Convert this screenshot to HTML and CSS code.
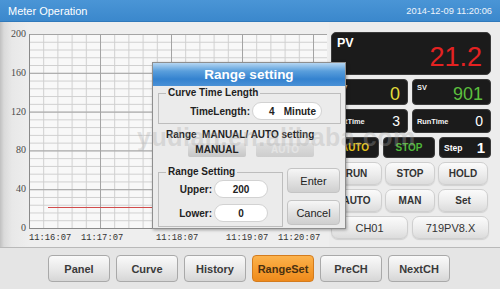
FILE: index.html
```html
<!DOCTYPE html>
<html>
<head>
<meta charset="utf-8">
<link rel="stylesheet" href="styles.css">
</head>
<body>
<div class="screen">
  <header class="titlebar">
    <span class="app-title">Meter Operation</span>
    <span class="clock">2014-12-09 11:20:06</span>
  </header>
  <main class="main">
    <div class="chart">
      <svg class="chart-svg" width="329" height="225" viewBox="0 0 329 225">
        <defs>
          <pattern id="minor" patternUnits="userSpaceOnUse" x="29" y="12" width="14.2" height="7.76">
            <path d="M14.2 0.5 H0.5 V7.76" fill="none" stroke="#cfcfcf" stroke-width="1"/>
          </pattern>
          <pattern id="major" patternUnits="userSpaceOnUse" x="29" y="12" width="71" height="38.8">
            <path d="M71 0.5 H0.5 V38.8" fill="none" stroke="#a4a4a4" stroke-width="1"/>
          </pattern>
        </defs>
        <rect x="29" y="12" width="298" height="194" fill="#f8f8f8"/>
        <rect x="29" y="12" width="298" height="194" fill="url(#minor)"/>
        <rect x="29" y="12" width="298" height="194" fill="url(#major)"/>
        <line x1="29.5" y1="12" x2="29.5" y2="207" stroke="#8a8a8a"/>
        <line x1="29" y1="206.5" x2="327" y2="206.5" stroke="#8a8a8a"/>
        <line x1="48" y1="185.5" x2="327" y2="185.5" stroke="#d24c4c"/>
        <g class="ylab">
          <text x="26" y="15">200</text>
          <text x="26" y="54">160</text>
          <text x="26" y="93">120</text>
          <text x="26" y="131">80</text>
          <text x="26" y="170">40</text>
          <text x="26" y="209">0</text>
        </g>
        <g class="xlab">
          <text x="29" y="218">11:16:07</text>
          <text x="81" y="218">11:17:07</text>
          <text x="156" y="218">11:18:07</text>
          <text x="226" y="218">11:19:07</text>
          <text x="278" y="218">11:20:07</text>
        </g>
      </svg>
    </div>
    <aside class="side">
      <div class="pv">
        <span class="pv-label">PV</span>
        <span class="pv-value">21.2</span>
      </div>
      <div class="row two tall">
        <div class="cell top"><span class="lbl">MV</span><span class="val big yellow">0</span></div>
        <div class="cell top"><span class="lbl">SV</span><span class="val big green">901</span></div>
      </div>
      <div class="row two mid">
        <div class="cell"><span class="lbl">SetTime</span><span class="val white">3</span></div>
        <div class="cell"><span class="lbl">RunTime</span><span class="val white">0</span></div>
      </div>
      <div class="row three small">
        <div class="cell status yellow">AUTO</div>
        <div class="cell status green">STOP</div>
        <div class="cell step"><span class="step-lbl">Step</span><span class="step-val">1</span></div>
      </div>
      <div class="btnrow three">
        <button class="key bold">RUN</button>
        <button class="key bold">STOP</button>
        <button class="key bold">HOLD</button>
      </div>
      <div class="btnrow three">
        <button class="key bold">AUTO</button>
        <button class="key bold">MAN</button>
        <button class="key bold">Set</button>
      </div>
      <div class="btnrow two">
        <button class="key">CH01</button>
        <button class="key">719PV8.X</button>
      </div>
    </aside>
  </main>
  <footer class="footer">
    <button class="tab">Panel</button>
    <button class="tab">Curve</button>
    <button class="tab">History</button>
    <button class="tab active">RangeSet</button>
    <button class="tab">PreCH</button>
    <button class="tab">NextCH</button>
  </footer>

  <div class="dialog">
    <div class="dlg-title">Range setting</div>
    <div class="dlg-body">
      <fieldset class="group g1">
        <legend>Curve Time Length</legend>
        <div class="field-row right">
          <span class="flabel">TimeLength:</span>
          <span class="pill wide"><span class="pnum">4</span><span class="punit">Minute</span></span>
        </div>
      </fieldset>
      <div class="mode-title">Range&nbsp; MANUAL/ AUTO setting</div>
      <div class="mode-row">
        <button class="mode on">MANUAL</button>
        <button class="mode off">AUTO</button>
      </div>
      <div class="lower">
        <fieldset class="group g2">
          <legend>Range Setting</legend>
          <div class="field-row">
            <span class="flabel w">Upper:</span>
            <span class="pill num">200</span>
          </div>
          <div class="field-row">
            <span class="flabel w">Lower:</span>
            <span class="pill num">0</span>
          </div>
        </fieldset>
        <div class="actions">
          <button class="act">Enter</button>
          <button class="act">Cancel</button>
        </div>
      </div>
    </div>
  </div>
  <div class="watermark">yudian.en.alibaba.com</div>
</div>
</body>
</html>
```
FILE: styles.css
```css
* { box-sizing: border-box; }
html, body { margin: 0; padding: 0; }
body {
  width: 500px;
  height: 289px;
  overflow: hidden;
  font-family: "Liberation Sans", Arial, sans-serif;
  background: #e9e9e9;
}
.screen {
  position: relative;
  width: 500px;
  height: 289px;
  display: flex;
  flex-direction: column;
}
.titlebar {
  height: 22px;
  flex: none;
  display: flex;
  align-items: center;
  justify-content: space-between;
  padding: 0 8px 0 8px;
  background: linear-gradient(#4a95d6, #3b88cc);
  color: #fff;
  border-bottom: 1px solid #3079bb;
}
.app-title { font-size: 11px; }
.clock { font-size: 9.3px; color: #eef4fb; }

.main {
  height: 225px;
  flex: none;
  display: flex;
  background: #ececec;
}
.chart {
  width: 329px;
  flex: none;
  background: linear-gradient(90deg, #c0c0c0 0px, #dadada 4px, #e8e8e8 12px, #eeeeee 29px);
}
.chart-svg { display: block; }
.ylab text {
  font-family: "Liberation Serif", "Times New Roman", serif;
  font-size: 10px;
  fill: #4a4a4a;
  text-anchor: end;
}
.xlab text {
  font-family: "Liberation Mono", "Courier New", monospace;
  font-size: 8.8px;
  fill: #333;
}

.side {
  width: 171px;
  flex: none;
  padding: 10px 9px 0 2px;
  display: flex;
  flex-direction: column;
  gap: 4px;
}
.pv {
  height: 43px;
  background: #1b1b1b;
  border-radius: 5px;
  border: 1px solid #3a3a3a;
  position: relative;
  display: flex;
  justify-content: space-between;
  padding: 3px 8px 0 5px;
}
.pv-label { color: #fff; font-weight: bold; font-size: 12.5px; }
.pv-value {
  color: #e32222;
  font-size: 27px;
  align-self: flex-end;
  line-height: 30px;
  margin-bottom: 2px;
}
.row { display: grid; gap: 4px; }
.row.two { grid-template-columns: 77px 79px; }
.row.three { grid-template-columns: 48px 1fr 52px; gap: 5px 4px; }
.row.tall { height: 26px; }
.row.mid { height: 24px; }
.row.small { height: 21px; }
.cell {
  background: #1b1b1b;
  border: 1px solid #3a3a3a;
  border-radius: 4px;
  display: flex;
  align-items: center;
  justify-content: space-between;
  padding: 0 7px 0 4px;
  color: #fff;
}
.cell.top { align-items: flex-start; }
.cell.top .lbl { margin-top: 3px; }
.cell.top .val { align-self: flex-end; line-height: 20px; }
.lbl { font-size: 7.4px; font-weight: bold; color: #f2f2f2; }
.val { font-size: 14px; line-height: 16px; }
.val.big { font-size: 18px; }
.yellow { color: #e2dc3a; }
.green { color: #5cbf3e; }
.white { color: #fff; }
.status {
  justify-content: center;
  font-weight: bold;
  font-size: 10px;
  padding: 0;
}
.status.yellow { color: #e6c41e; }
.status.green { color: #4fb83a; }
.step { padding: 0 5px 0 4px; }
.step-lbl { font-size: 8.5px; font-weight: bold; }
.step-val { font-size: 15px; font-weight: bold; }

.btnrow { display: grid; height: 23px; gap: 3px; }
.btnrow.three { grid-template-columns: 51px 50px 50px; }
.btnrow.two { grid-template-columns: 77px 77px; gap: 4px; }
.key {
  font-family: "Liberation Sans", Arial, sans-serif;
  border: 1px solid #cfcfcf;
  border-radius: 7px;
  background: linear-gradient(#fbfbfb, #ececec 55%, #dcdcdc);
  color: #333;
  font-size: 11px;
  padding: 0;
  box-shadow: 0 1px 1px rgba(0,0,0,0.12);
}
.key.bold { font-weight: bold; font-size: 10px; }

.footer {
  flex: 1;
  border-top: 1px solid #b9b9b9;
  background: #e5e5e5;
  display: flex;
  gap: 6px;
  padding: 7px 0 0 48px;
  align-items: flex-start;
}
.tab {
  font-family: "Liberation Sans", Arial, sans-serif;
  width: 62px;
  height: 27px;
  font-size: 11px;
  font-weight: bold;
  color: #3a3a3a;
  border: 1px solid #a9a9a9;
  border-radius: 4px;
  background: linear-gradient(#fafafa, #e6e6e6 60%, #d6d6d6);
  padding: 0;
}
.tab.active {
  background: linear-gradient(#fcb24c, #f59a2c 60%, #ee8a1c);
  border-color: #d47c1e;
  color: #4a3010;
}

.dialog {
  position: absolute;
  left: 152px;
  top: 62px;
  width: 194px;
  height: 167px;
  background: #ebebeb;
  border: 1px solid #8e8e8e;
  box-shadow: 1px 1px 3px rgba(0,0,0,0.35);
}
.dlg-title {
  height: 23px;
  background: linear-gradient(#b5d6f2 0%, #5a9fdc 35%, #3482cf 70%, #4a91d6 100%);
  color: #fff;
  font-weight: bold;
  font-size: 13.5px;
  text-align: center;
  line-height: 23px;
}
.dlg-body { padding: 1px 4px 0 5px; }
.group {
  margin: 0;
  border: 1px solid #bdbdbd;
  padding: 0;
  min-width: 0;
}
.group legend {
  font-size: 10px;
  font-weight: bold;
  color: #1e1e1e;
  padding: 0 2px;
  margin-left: 7px;
  line-height: 12px;
}
.g1 { padding: 3px 18px 3px 0; }
.field-row { display: flex; align-items: center; gap: 2px; }
.field-row.right { justify-content: flex-end; }
.flabel { font-size: 10px; font-weight: bold; color: #222; }
.flabel.w { width: 53px; text-align: right; }
.pill {
  height: 18px;
  background: #fff;
  border: 1px solid #d2d2d2;
  border-radius: 9px;
  display: flex;
  align-items: center;
  font-size: 10px;
  font-weight: bold;
  color: #222;
}
.pill.wide { width: 70px; padding: 0 5px 0 16px; justify-content: space-between; }
.pill.num { width: 54px; justify-content: center; }
.mode-title {
  font-size: 10px;
  font-weight: bold;
  color: #222;
  margin: 5px 0 0 8px;
  line-height: 12px;
}
.mode-row {
  display: flex;
  gap: 10px;
  padding-left: 30px;
  margin-top: 2px;
}
.mode {
  font-family: "Liberation Sans", Arial, sans-serif;
  width: 58px;
  height: 14px;
  font-size: 10px;
  font-weight: bold;
  border: none;
  border-radius: 2px;
  background: linear-gradient(#e2e2e2, #c6c6c6);
  padding: 0;
  line-height: 14px;
}
.mode.on { color: #222; }
.mode.off { color: #e4e4e4; background: linear-gradient(#dedede, #cdcdcd); }
.lower {
  display: flex;
  align-items: flex-start;
  margin-top: 3px;
}
.g2 {
  width: 125px;
  height: 61px;
  margin-top: 6px;
  padding: 2px 0 0 0;
  display: flex;
  flex-direction: column;
  gap: 6px;
}
.actions {
  display: flex;
  flex-direction: column;
  gap: 7px;
  margin: 8px 0 0 4px;
}
.act {
  font-family: "Liberation Sans", Arial, sans-serif;
  width: 53px;
  height: 25px;
  font-size: 11px;
  color: #222;
  border: 1px solid #c4c4c4;
  border-radius: 4px;
  background: linear-gradient(#f6f6f6, #dedede 60%, #cfcfcf);
  padding: 0;
}
.watermark {
  position: absolute;
  left: 137px;
  top: 123px;
  font-size: 25px;
  font-weight: bold;
  color: rgba(170,170,170,0.33);
  white-space: nowrap;
  pointer-events: none;
  letter-spacing: 0.5px;
}
```
